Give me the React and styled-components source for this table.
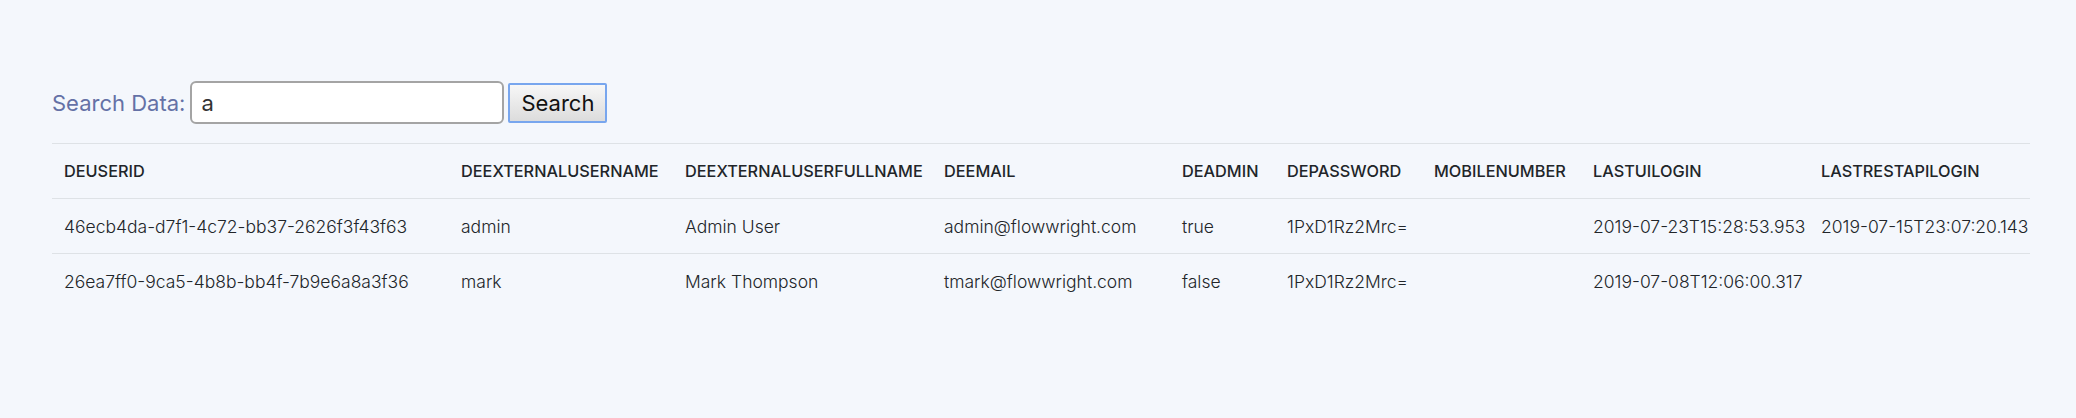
import React from "react";
import styled, { createGlobalStyle } from "styled-components";

const GlobalStyle = createGlobalStyle`
  html, body {
    margin: 0;
    padding: 0;
    background: #f4f7fc;
  }
  body {
    font-family: Inter, "Open Sans", sans-serif;
    color: #212529;
  }
`;

const columns = [
  { key: "DEUSERID", width: 397 },
  { key: "DEEXTERNALUSERNAME", width: 224 },
  { key: "DEEXTERNALUSERFULLNAME", width: 259 },
  { key: "DEEMAIL", width: 238 },
  { key: "DEADMIN", width: 105 },
  { key: "DEPASSWORD", width: 147 },
  { key: "MOBILENUMBER", width: 159 },
  { key: "LASTUILOGIN", width: 228 },
  { key: "LASTRESTAPILOGIN", width: 221 },
];

const rows = [
  {
    DEUSERID: "46ecb4da-d7f1-4c72-bb37-2626f3f43f63",
    DEEXTERNALUSERNAME: "admin",
    DEEXTERNALUSERFULLNAME: "Admin User",
    DEEMAIL: "admin@flowwright.com",
    DEADMIN: "true",
    DEPASSWORD: "1PxD1Rz2Mrc=",
    MOBILENUMBER: "",
    LASTUILOGIN: "2019-07-23T15:28:53.953",
    LASTRESTAPILOGIN: "2019-07-15T23:07:20.143",
  },
  {
    DEUSERID: "26ea7ff0-9ca5-4b8b-bb4f-7b9e6a8a3f36",
    DEEXTERNALUSERNAME: "mark",
    DEEXTERNALUSERFULLNAME: "Mark Thompson",
    DEEMAIL: "tmark@flowwright.com",
    DEADMIN: "false",
    DEPASSWORD: "1PxD1Rz2Mrc=",
    MOBILENUMBER: "",
    LASTUILOGIN: "2019-07-08T12:06:00.317",
    LASTRESTAPILOGIN: "",
  },
];

const App = () => {
  return (
    <Page>
      <GlobalStyle />
      <SearchBar>
        <Label htmlFor="search">Search Data:</Label>
        <SearchInput id="search" type="text" defaultValue="a" />
        <SearchButton type="button">Search</SearchButton>
      </SearchBar>

      <Table>
        <colgroup>
          {columns.map((c) => (
            <col key={c.key} style={{ width: c.width }} />
          ))}
        </colgroup>
        <thead>
          <tr>
            {columns.map((c) => (
              <Th key={c.key}>{c.key}</Th>
            ))}
          </tr>
        </thead>
        <tbody>
          {rows.map((r) => (
            <tr key={r.DEUSERID}>
              {columns.map((c) => (
                <Td key={c.key}>{r[c.key]}</Td>
              ))}
            </tr>
          ))}
        </tbody>
      </Table>
    </Page>
  );
};

const Page = styled.div`
  padding: 81px 46px 0 52px;
  min-height: 418px;
  box-sizing: border-box;
`;

const SearchBar = styled.div`
  display: flex;
  align-items: center;
  height: 43px;
  margin-bottom: 19px;
`;

const Label = styled.label`
  font-size: 22px;
  color: #6471a6;
  margin-right: 5px;
`;

const SearchInput = styled.input`
  box-sizing: border-box;
  width: 314px;
  height: 43px;
  border: 2px solid #a4a4a4;
  border-radius: 6px;
  background: #fff;
  padding: 0 9px;
  font-family: inherit;
  font-size: 22px;
  color: #333;
  outline: none;
`;

const SearchButton = styled.button`
  box-sizing: border-box;
  width: 99px;
  height: 40px;
  margin-left: 4px;
  padding: 0;
  border: 2px solid #78a6ee;
  border-radius: 2px;
  background: linear-gradient(#f7f7f7, #dcdcdc);
  font-family: inherit;
  font-size: 22px;
  color: #111;
  cursor: pointer;
`;

const Table = styled.table`
  width: 1978px;
  border-collapse: collapse;
  table-layout: fixed;
`;

const Th = styled.th`
  height: 54px;
  padding: 0 12px;
  border-top: 1px solid #dee2e6;
  text-align: left;
  font-size: 16.3px;
  font-weight: 500;
  color: #212529;
  white-space: nowrap;
`;

const Td = styled.td`
  height: 54px;
  padding: 0 12px;
  border-top: 1px solid #dee2e6;
  font-size: 17.5px;
  font-weight: 300;
  color: #212529;
  white-space: nowrap;
`;

export default App;
